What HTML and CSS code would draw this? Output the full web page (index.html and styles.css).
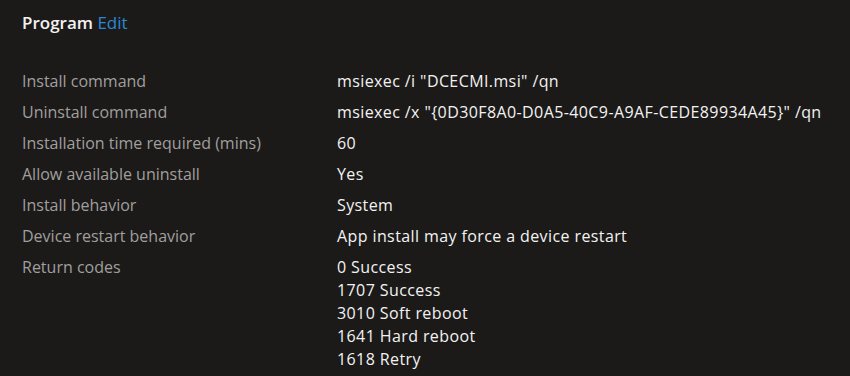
FILE: index.html
```html
<!DOCTYPE html>
<html lang="en">
<head>
    <meta charset="UTF-8">
    <meta name="viewport" content="width=device-width, initial-scale=1.0">
    <title>Program</title>
    <link rel="stylesheet" href="styles.css">
</head>
<body>
    <div class="section">
        <h2 class="section-title">Program <a class="edit-link" href="#">Edit</a></h2>
        <div class="props">
            <div class="prop-row">
                <div class="prop-label">Install command</div>
                <div class="prop-value">msiexec /i "DCECMI.msi" /qn</div>
            </div>
            <div class="prop-row">
                <div class="prop-label">Uninstall command</div>
                <div class="prop-value">msiexec /x "{0D30F8A0-D0A5-40C9-A9AF-CEDE89934A45}" /qn</div>
            </div>
            <div class="prop-row">
                <div class="prop-label">Installation time required (mins)</div>
                <div class="prop-value">60</div>
            </div>
            <div class="prop-row">
                <div class="prop-label">Allow available uninstall</div>
                <div class="prop-value">Yes</div>
            </div>
            <div class="prop-row">
                <div class="prop-label">Install behavior</div>
                <div class="prop-value">System</div>
            </div>
            <div class="prop-row">
                <div class="prop-label">Device restart behavior</div>
                <div class="prop-value">App install may force a device restart</div>
            </div>
            <div class="prop-row">
                <div class="prop-label">Return codes</div>
                <div class="prop-value">
                    <div>0 Success</div>
                    <div>1707 Success</div>
                    <div>3010 Soft reboot</div>
                    <div>1641 Hard reboot</div>
                    <div>1618 Retry</div>
                </div>
            </div>
        </div>
    </div>
</body>
</html>
```

FILE: styles.css
```css
body {
    font-family: "Open Sans", "Noto Sans", sans-serif;
    margin: 0;
    padding: 0;
    background-color: #1b1a19;
    color: #f3f2f1;
    font-size: 16px;
}
.section {
    padding: 12px 22px;
}
.section-title {
    margin: 0;
    font-size: 17px;
    font-weight: 600;
    line-height: 22px;
}
.edit-link {
    color: #2b88d8;
    font-weight: 400;
    font-size: 17px;
    text-decoration: none;
}
.props {
    margin-top: 36px;
    display: flex;
    flex-direction: column;
    gap: 8px;
}
.prop-row {
    display: grid;
    grid-template-columns: 315px 1fr;
    line-height: 23px;
}
.prop-label {
    color: #a19f9d;
}
.prop-value {
    letter-spacing: 0.4px;
}
```
